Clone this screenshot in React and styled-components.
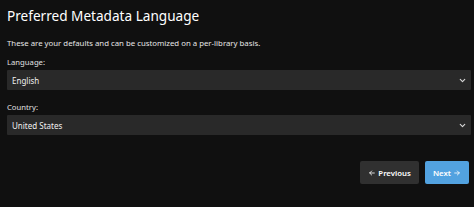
import React from 'react';
import styled, { createGlobalStyle } from 'styled-components';

const GlobalStyle = createGlobalStyle`
    html, body {
        margin: 0;
        padding: 0;
        background: #101010;
    }
    body {
        font-family: "Noto Sans", sans-serif;
        color: #ffffff;
    }
`;

const Page = styled.div`
    width: 474px;
    height: 207px;
    box-sizing: border-box;
    padding: 6px 3px 0 7px;
    background: #101010;
`;

const Title = styled.h1`
    margin: 0;
    font-size: 13.6px;
    font-weight: 400;
    line-height: 20px;
    color: #ffffff;
`;

const Intro = styled.p`
    margin: 11px 0 8px;
    font-size: 7.8px;
    line-height: 12px;
    color: #e6e6e6;
`;

const Field = styled.div`
    display: flex;
    flex-direction: column;
    margin-bottom: 12px;
`;

const Label = styled.label`
    font-size: 7.7px;
    line-height: 11px;
    margin-bottom: 2px;
    color: #e0e0e0;
`;

const SelectBox = styled.div`
    position: relative;
    height: 20px;
    display: flex;
    align-items: center;
    padding: 0 5px;
    background: #292929;
    border-radius: 1px;
    font-size: 8px;
    color: #f0f0f0;
`;

const Chevron = styled.svg`
    position: absolute;
    right: 4px;
    top: 6px;
    width: 9px;
    height: 9px;
`;

const Actions = styled.div`
    display: flex;
    justify-content: flex-end;
    gap: 6px;
    margin-top: 26px;
    padding-right: 2px;
`;

const Button = styled.button`
    height: 23px;
    padding: 0 ${p => p.$pad}px;
    border: none;
    border-radius: 2px;
    display: flex;
    align-items: center;
    gap: 2px;
    font-family: "Noto Sans", sans-serif;
    font-size: 7.8px;
    font-weight: 600;
    color: #ffffff;
    background: ${p => p.$primary ? '#52a2e0' : '#303030'};
    cursor: pointer;
`;

const Arrow = styled.svg`
    width: 8px;
    height: 8px;
`;

const Select = ({ value }) => (
    <SelectBox>
        {value}
        <Chevron viewBox="0 0 24 24">
            <path d="M6 9l6 6 6-6" fill="none" stroke="#d8d8d8" strokeWidth="3" strokeLinecap="round" strokeLinejoin="round"/>
        </Chevron>
    </SelectBox>
);

export default function App() {
    return (
        <Page>
            <GlobalStyle/>
            <Title>Preferred Metadata Language</Title>
            <Intro>These are your defaults and can be customized on a per-library basis.</Intro>
            <Field>
                <Label>Language:</Label>
                <Select value="English"/>
            </Field>
            <Field>
                <Label>Country:</Label>
                <Select value="United States"/>
            </Field>
            <Actions>
                <Button $pad={8}>
                    <Arrow viewBox="0 0 24 24">
                        <path d="M19 12H5M11 6l-6 6 6 6" fill="none" stroke="#fff" strokeWidth="2.4" strokeLinecap="round" strokeLinejoin="round"/>
                    </Arrow>
                    Previous
                </Button>
                <Button $primary $pad={8}>
                    Next
                    <Arrow viewBox="0 0 24 24">
                        <path d="M5 12h14M13 6l6 6-6 6" fill="none" stroke="#fff" strokeWidth="2.4" strokeLinecap="round" strokeLinejoin="round"/>
                    </Arrow>
                </Button>
            </Actions>
        </Page>
    );
}
